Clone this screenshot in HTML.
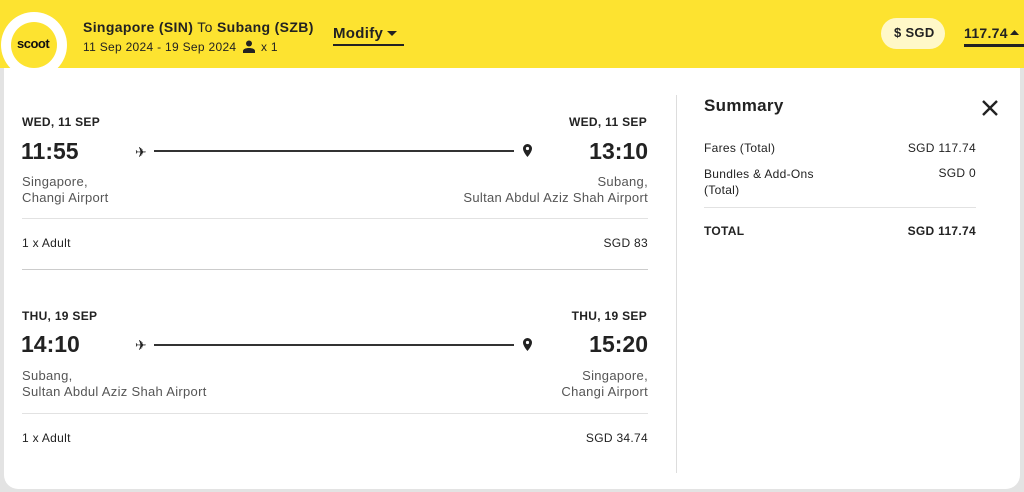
<!DOCTYPE html>
<html><head><style>
*{margin:0;padding:0;box-sizing:border-box}
body{width:1024px;height:492px;background:#e3e3e3;font-family:"Liberation Sans",sans-serif;color:#222;position:relative;overflow:hidden;letter-spacing:0.3px}
.a{position:absolute;white-space:nowrap}
.hdr{position:absolute;left:0;top:0;width:1024px;height:68px;background:#fde330}
.panel{position:absolute;left:4px;top:68px;width:1016px;height:421px;background:#fff;border-radius:0 0 14px 14px}
.b{font-weight:bold}
.s13{font-size:13px}
.r{text-align:right}
.t{font-size:23px;letter-spacing:0}
.line{position:absolute;height:1px;background:#e2e2e2}
</style></head><body>
<div class="hdr"></div>
<div class="panel"></div>
<div class="a" style="left:1px;top:12px;width:66px;height:66px;border-radius:50%;background:#fff"></div>
<div class="a" style="left:11px;top:22px;width:46px;height:46px;border-radius:50%;background:#fde330"></div>
<div class="a b" style="left:17px;top:36px;font-size:13px;letter-spacing:-0.5px;color:#111">scoot</div>
<div class="a" style="left:83px;top:19px;font-size:14px;letter-spacing:0.35px"><b>Singapore (SIN)</b> To <b>Subang (SZB)</b></div>
<div class="a" style="left:83px;top:40px;font-size:12px">11 Sep 2024 - 19 Sep 2024</div>
<svg class="a" style="left:242px;top:40px" width="14" height="13" viewBox="0 0 14 13"><circle cx="7" cy="3.5" r="3" fill="#222"/><path d="M1 13v-2c0-2 3-3 6-3s6 1 6 3v2z" fill="#222"/></svg>
<div class="a" style="left:261px;top:40px;font-size:12px">x 1</div>
<div class="a b" style="left:333px;top:25px;font-size:15px">Modify</div>
<svg class="a" style="left:387px;top:31px" width="10" height="6"><path d="M0 0h10L5 5z" fill="#222"/></svg>
<div class="a" style="left:333px;top:44px;width:71px;height:2px;background:#222"></div>
<div class="a" style="left:881px;top:18px;width:64px;height:31px;border-radius:16px;background:#fff8c8"></div>
<div class="a b" style="left:894px;top:25px;font-size:13px">$ SGD</div>
<div class="a b" style="left:964px;top:25px;font-size:14px">117.74</div>
<svg class="a" style="left:1010px;top:30px" width="9" height="6"><path d="M0 5h9L4.5 0z" fill="#222"/></svg>
<div class="a" style="left:964px;top:44px;width:60px;height:3px;background:#222"></div>

<div class="a b" style="left:22px;top:115px;font-size:12px">WED, 11 SEP</div>
<div class="a b r" style="right:377px;top:115px;font-size:12px">WED, 11 SEP</div>
<div class="a b t" style="left:21px;top:138px">11:55</div>
<div class="a b t" style="right:376px;top:138px">13:10</div>
<div class="a" style="left:135px;top:144px;font-size:14px">✈</div>
<div class="a" style="left:154px;top:150px;width:360px;height:2px;background:#333"></div>
<svg class="a" style="left:523px;top:144px" width="9" height="13" viewBox="0 0 9 13"><path d="M4.5 0a4.5 4.5 0 0 0-4.5 4.5C0 8 4.5 13 4.5 13S9 8 9 4.5A4.5 4.5 0 0 0 4.5 0z" fill="#222"/><circle cx="4.5" cy="4.5" r="1.6" fill="#fff"/></svg>
<div class="a s13" style="left:22px;top:174px;color:#555;line-height:16px">Singapore,<br>Changi Airport</div>
<div class="a s13 r" style="right:376px;top:174px;color:#555;line-height:16px">Subang,<br>Sultan Abdul Aziz Shah Airport</div>
<div class="line" style="left:22px;top:218px;width:626px"></div>
<div class="a" style="left:22px;top:236px;font-size:12px">1 x Adult</div>
<div class="a" style="right:376px;top:236px;font-size:12px">SGD 83</div>
<div class="line" style="left:22px;top:269px;width:626px;background:#ccc"></div>

<div class="a b" style="left:22px;top:309px;font-size:12px">THU, 19 SEP</div>
<div class="a b r" style="right:377px;top:309px;font-size:12px">THU, 19 SEP</div>
<div class="a b t" style="left:21px;top:331px">14:10</div>
<div class="a b t" style="right:376px;top:331px">15:20</div>
<div class="a" style="left:135px;top:337px;font-size:14px">✈</div>
<div class="a" style="left:154px;top:344px;width:360px;height:2px;background:#333"></div>
<svg class="a" style="left:523px;top:338px" width="9" height="13" viewBox="0 0 9 13"><path d="M4.5 0a4.5 4.5 0 0 0-4.5 4.5C0 8 4.5 13 4.5 13S9 8 9 4.5A4.5 4.5 0 0 0 4.5 0z" fill="#222"/><circle cx="4.5" cy="4.5" r="1.6" fill="#fff"/></svg>
<div class="a s13" style="left:22px;top:368px;color:#555;line-height:16px">Subang,<br>Sultan Abdul Aziz Shah Airport</div>
<div class="a s13 r" style="right:376px;top:368px;color:#555;line-height:16px">Singapore,<br>Changi Airport</div>
<div class="line" style="left:22px;top:413px;width:626px"></div>
<div class="a" style="left:22px;top:431px;font-size:12px">1 x Adult</div>
<div class="a" style="right:376px;top:431px;font-size:12px">SGD 34.74</div>

<div class="a" style="left:676px;top:95px;width:1px;height:378px;background:#ddd"></div>

<div class="a b" style="left:704px;top:96px;font-size:17px">Summary</div>
<svg class="a" style="left:981px;top:99px" width="18" height="18"><path d="M2 2L16 16M16 2L2 16" stroke="#222" stroke-width="2.4"/></svg>
<div class="a" style="left:704px;top:141px;font-size:12px">Fares (Total)</div>
<div class="a" style="right:48px;top:141px;font-size:12px">SGD 117.74</div>
<div class="a" style="left:704px;top:166px;font-size:12px;line-height:16px">Bundles &amp; Add-Ons<br>(Total)</div>
<div class="a" style="right:48px;top:166px;font-size:12px">SGD 0</div>
<div class="line" style="left:704px;top:207px;width:272px"></div>
<div class="a b" style="left:704px;top:224px;font-size:12px">TOTAL</div>
<div class="a b" style="right:48px;top:224px;font-size:12px">SGD 117.74</div>
</body></html>
